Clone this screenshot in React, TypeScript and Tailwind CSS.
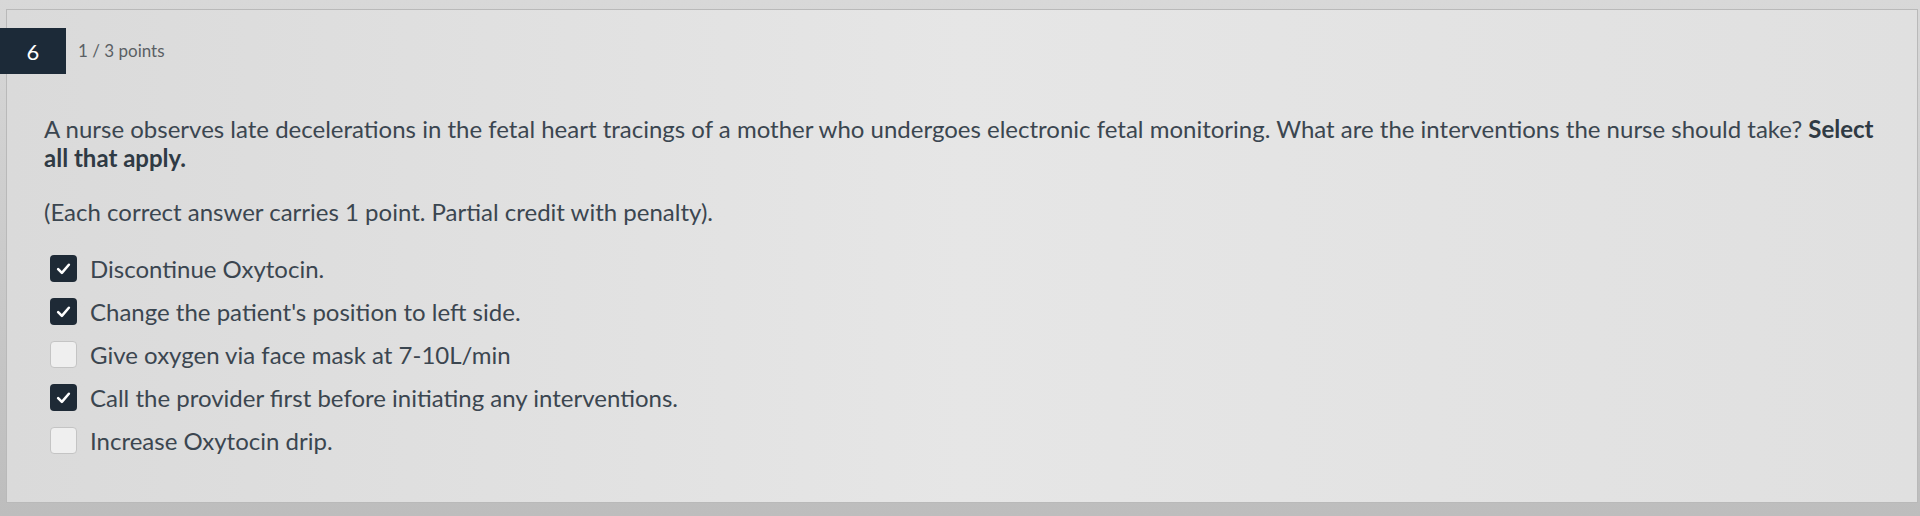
import React from 'react'

const options = [
    { label: 'Discontinue Oxytocin.', checked: true },
    { label: "Change the patient's position to left side.", checked: true },
    { label: 'Give oxygen via face mask at 7-10L/min', checked: false },
    { label: 'Call the provider first before initiating any interventions.', checked: true },
    { label: 'Increase Oxytocin drip.', checked: false },
]

function Box({ checked }: { checked: boolean }) {
    if (!checked) {
        return <div className="w-[27px] h-[27px] rounded-[4px] border border-[#c4c4c4] bg-[#efefef] shrink-0" />
    }
    return (
        <div className="w-[27px] h-[27px] rounded-[4px] bg-[#1e2a36] flex items-center justify-center shrink-0">
            <svg width="15" height="13" viewBox="0 0 14 12" fill="none">
                <polyline points="2,6.5 5.5,10 12,2.5" stroke="#ffffff" strokeWidth="2.4" strokeLinecap="round" strokeLinejoin="round" />
            </svg>
        </div>
    )
}

export default function App() {
    return (
        <div className="w-[1920px] h-[516px] overflow-hidden bg-gradient-to-b from-[#d8d8d8] to-[#bdbdbd] font-['Lato','Noto_Sans',sans-serif] text-[#3b4650]">
            <div className="ml-[6px] mr-[2px] mt-[9px] h-[494px] border border-[#b9b9b9] bg-gradient-to-r from-[#dadada] via-[#e6e6e6] to-[#e0e0e0]">
                {/* header */}
                <div className="flex items-center mt-[18px]">
                    <div className="-ml-[7px] w-[66px] h-[46px] bg-[#1c2a38] text-white text-[22px] flex items-center justify-center">
                        6
                    </div>
                    <span className="ml-[12px] text-[17px] text-[#5a5f64]">1 / 3 points</span>
                </div>

                <div className="pl-[37px] pr-[36px] mt-[40px] text-[24px] leading-[29px]">
                    <div>
                        <div>
                            A nurse observes late decelerations in the fetal heart tracings of a mother who undergoes electronic fetal monitoring. What are the interventions the nurse should take? <strong className="font-bold text-[#2f3a44]">Select</strong>
                        </div>
                        <div className="font-bold text-[#2f3a44]">all that apply.</div>
                    </div>
                    <p className="mt-[25px]">(Each correct answer carries 1 point. Partial credit with penalty).</p>

                    <div className="mt-[21px] flex flex-col">
                        {options.map((o) => (
                            <label key={o.label} className="h-[43px] flex items-center pl-[6px] gap-[13px]">
                                <Box checked={o.checked} />
                                <span>{o.label}</span>
                            </label>
                        ))}
                    </div>
                </div>
            </div>
        </div>
    )
}
